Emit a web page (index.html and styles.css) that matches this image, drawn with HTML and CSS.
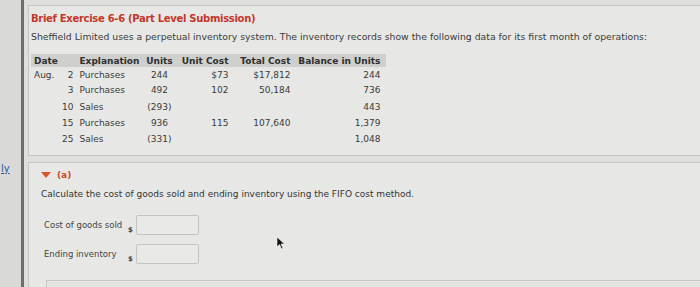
FILE: index.html
```html
<!DOCTYPE html>
<html>
<head>
<meta charset="utf-8">
<link rel="stylesheet" href="styles.css">
</head>
<body>
<div class="page">
  <aside class="sidebar"><a class="side-link" href="#">ly</a></aside>
  <div class="divider"></div>
  <main class="main">
    <section class="panel panel-top">
      <h1 class="title">Brief Exercise 6-6 (Part Level Submission)</h1>
      <p class="desc">Sheffield Limited uses a perpetual inventory system. The inventory records show the following data for its first month of operations:</p>
      <table class="inv">
        <thead>
          <tr>
            <th class="c-date">Date</th>
            <th class="c-day"></th>
            <th class="c-exp">Explanation</th>
            <th class="c-units">Units</th>
            <th class="c-uc">Unit Cost</th>
            <th class="c-tc">Total Cost</th>
            <th class="c-bal">Balance in Units</th>
          </tr>
        </thead>
        <tbody>
          <tr class="first">
            <td class="c-date">Aug.</td><td class="c-day">2</td><td class="c-exp">Purchases</td><td class="c-units">244</td><td class="c-uc">$73</td><td class="c-tc">$17,812</td><td class="c-bal">244</td>
          </tr>
          <tr>
            <td class="c-date"></td><td class="c-day">3</td><td class="c-exp">Purchases</td><td class="c-units">492</td><td class="c-uc">102</td><td class="c-tc">50,184</td><td class="c-bal">736</td>
          </tr>
          <tr>
            <td class="c-date"></td><td class="c-day">10</td><td class="c-exp">Sales</td><td class="c-units">(293)</td><td class="c-uc"></td><td class="c-tc"></td><td class="c-bal">443</td>
          </tr>
          <tr>
            <td class="c-date"></td><td class="c-day">15</td><td class="c-exp">Purchases</td><td class="c-units">936</td><td class="c-uc">115</td><td class="c-tc">107,640</td><td class="c-bal">1,379</td>
          </tr>
          <tr>
            <td class="c-date"></td><td class="c-day">25</td><td class="c-exp">Sales</td><td class="c-units">(331)</td><td class="c-uc"></td><td class="c-tc"></td><td class="c-bal">1,048</td>
          </tr>
        </tbody>
      </table>
    </section>
    <section class="panel panel-part">
      <div class="part-head">
        <svg class="caret" width="10" height="7" viewBox="0 0 10 7"><polygon points="0,0 10,0 5,6" fill="#d9542b"/></svg>
        <span class="part-label">(a)</span>
      </div>
      <p class="question">Calculate the cost of goods sold and ending inventory using the FIFO cost method.</p>
      <div class="field">
        <label class="field-label">Cost of goods sold</label>
        <span class="dollar">$</span>
        <input class="field-input" type="text">
      </div>
      <div class="field">
        <label class="field-label">Ending inventory</label>
        <span class="dollar">$</span>
        <input class="field-input" type="text">
      </div>
      <div class="next-box"></div>
      <svg class="cursor" width="10" height="14" viewBox="0 0 10 14"><polygon points="1,1 1,11 3.5,8.5 5.5,13 7,12.3 5,8 8.5,8" fill="#111" stroke="#fff" stroke-width="0.6"/></svg>
    </section>
  </main>
</div>
</body>
</html>
```

FILE: styles.css
```css
* { box-sizing: border-box; }
html, body {
  margin: 0;
  padding: 0;
  width: 700px;
  height: 287px;
  overflow: hidden;
  background: #d6d7d4;
  font-family: "DejaVu Sans", Verdana, sans-serif;
  color: #333;
}
.page {
  display: flex;
  height: 287px;
  overflow: hidden;
}
.sidebar {
  width: 21px;
  padding-top: 157px;
  padding-left: 1px;
  background: #d9d9d7;
}
.side-link {
  font-size: 10px;
  color: #2a5a9c;
  text-decoration: underline;
}
.divider {
  width: 3px;
  background: #6e6f6d;
}
.main {
  flex: 1;
  padding: 5px 0 0 4px;
  background: #dfe0dd;
  display: flex;
  flex-direction: column;
  gap: 6px;
  position: relative;
  overflow: hidden;
}
.panel {
  background: #e7e8e5;
  border: 1px solid #c6c7c4;
  border-right: none;
}
.panel-top {
  height: 151px;
  flex: 0 0 151px;
  padding: 7px 0 0 2px;
}
.title {
  margin: 0;
  font-size: 10px;
  font-weight: bold;
  color: #c2372a;
  letter-spacing: -0.3px;
  line-height: 12px;
}
.desc {
  margin: 6px 0 0;
  font-size: 9.3px;
  line-height: 12px;
  letter-spacing: 0;
  color: #3a3a3a;
  white-space: nowrap;
}
.inv {
  margin-top: 11px;
  border-collapse: collapse;
  font-size: 9px;
  color: #3a3a3a;
}
.inv thead tr {
  background: #cfd0cd;
}
.inv th {
  font-weight: bold;
  height: 13px;
  padding: 0;
  white-space: nowrap;
  color: #2e2e2e;
}
.inv td {
  height: 16.4px;
  padding: 0;
  white-space: nowrap;
}
.inv tr.first td { height: 15px; }
.c-date { width: 31px; text-align: left; padding-left: 3px !important; }
.c-day { width: 9px; text-align: right; }
.inv th.c-exp, .c-exp { width: 63px; text-align: left; padding-left: 6px !important; }
.c-units { width: 40px; text-align: center; }
.c-uc { width: 49px; text-align: right; }
.c-tc { width: 62px; text-align: right; }
.c-bal { width: 96px; text-align: right; padding-right: 6px !important; }
.inv th.c-uc, .inv th.c-tc, .inv th.c-bal { text-align: right; }
.inv th.c-units { text-align: center; }

.panel-part {
  flex: 1;
  padding: 6px 0 0 12px;
  position: relative;
}
.part-head {
  display: flex;
  align-items: center;
  gap: 6px;
  height: 12px;
}
.caret { display: block; }
.part-label {
  font-size: 9px;
  font-weight: bold;
  color: #c9482a;
}
.question {
  margin: 7px 0 0;
  font-size: 9px;
  line-height: 12px;
  color: #333;
  white-space: nowrap;
}
.field {
  display: flex;
  align-items: flex-end;
  margin-top: 15px;
  height: 20px;
}
.field + .field { margin-top: 9px; }
.field-label {
  width: 87px;
  padding-left: 3px;
  font-size: 8.5px;
  color: #444;
  align-self: center;
}
.dollar {
  width: 8px;
  font-size: 7px;
  font-weight: bold;
  color: #444;
  padding-bottom: 1px;
}
.field-input {
  width: 63px;
  height: 20px;
  border: 1px solid #c4c4c2;
  border-radius: 2px;
  background: #e9eae7;
  margin: 0;
  padding: 0;
}
.next-box {
  margin: 16px 0 0 5px;
  height: 20px;
  border: 1px solid #c6c7c4;
  border-right: none;
  background: #e4e5e2;
}
.cursor {
  position: absolute;
  left: 247px;
  top: 73px;
}
```
